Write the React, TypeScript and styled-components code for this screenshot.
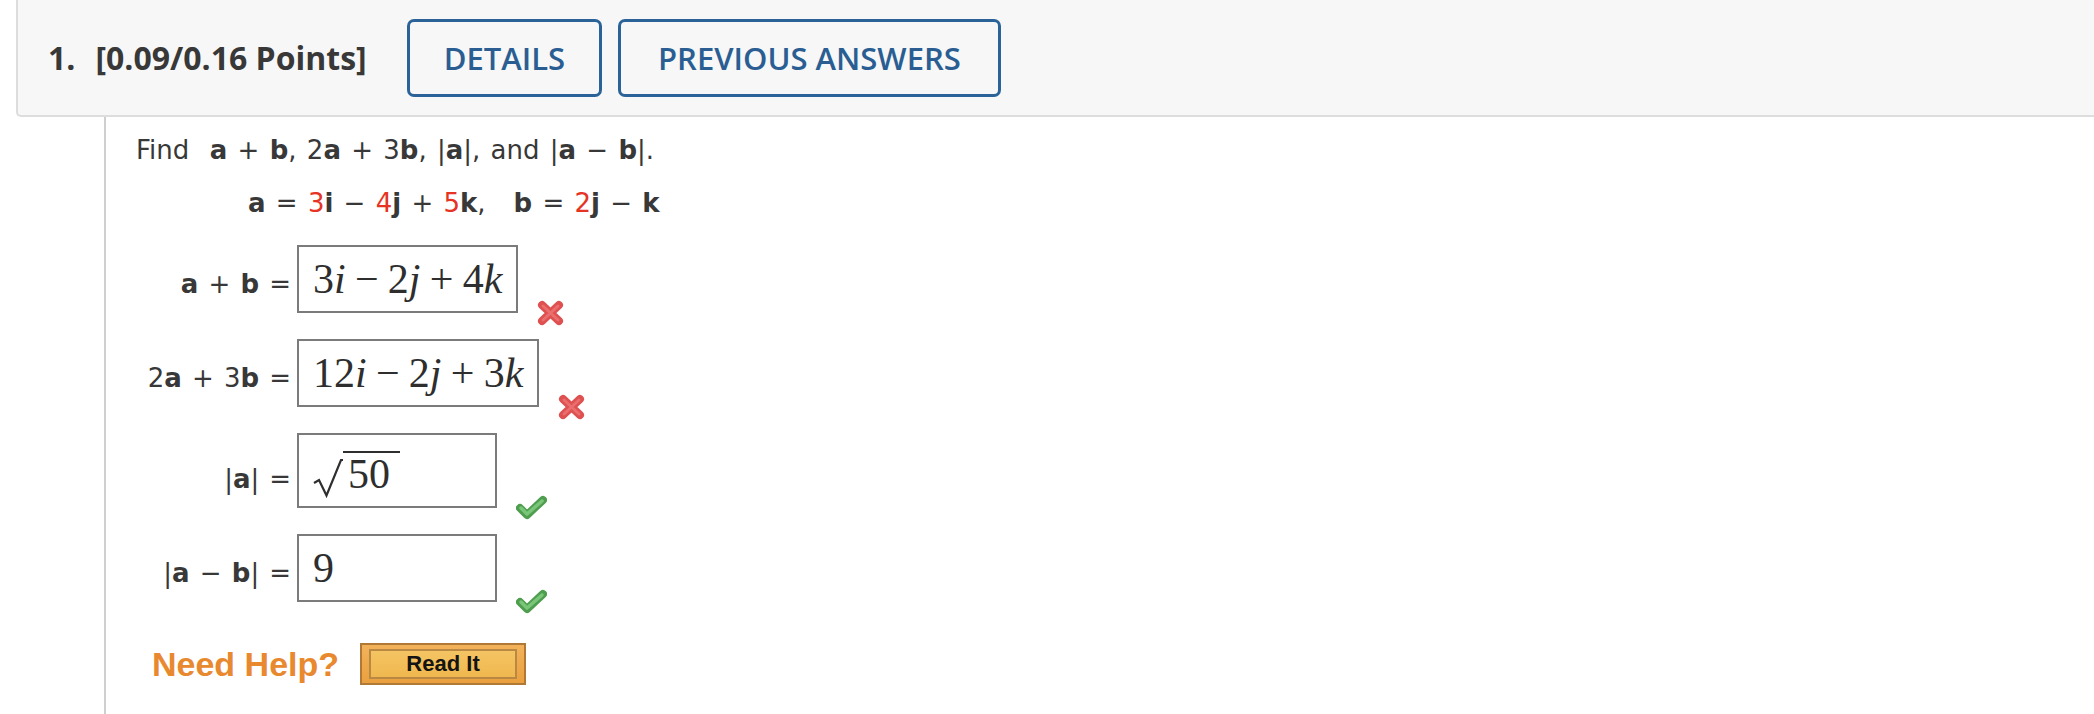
import React from "react"
import styled, { createGlobalStyle } from "styled-components"

const GlobalStyle = createGlobalStyle`
  html, body {
    margin: 0;
    padding: 0;
    background: #fff;
    overflow: hidden;
  }
`

const Page = styled.div`
  width: 2094px;
  height: 714px;
  overflow: hidden;
`

const Header = styled.header`
  display: flex;
  align-items: center;
  height: 115px;
  margin-left: 16px;
  padding-left: 30px;
  background: #f7f7f7;
  border-left: 2px solid #dddddd;
  border-bottom: 2px solid #dddddd;
  border-bottom-left-radius: 5px;
  box-sizing: content-box;
  font-family: "Open Sans", "Liberation Sans", sans-serif;
`

const QuestionNo = styled.span`
  font-size: 32px;
  font-weight: 700;
  color: #383838;
  margin-right: 20px;
`

const Points = styled.span`
  font-size: 32px;
  font-weight: 700;
  color: #383838;
  margin-right: 40px;
`

const HeaderButton = styled.button<{ $wide?: boolean }>`
  height: 78px;
  margin-right: 16px;
  padding: 0 ${({ $wide }) => ($wide ? "37px" : "34px")};
  border: 3px solid #2b6298;
  border-radius: 7px;
  background: transparent;
  color: #2a5e93;
  font-family: "Open Sans", "Liberation Sans", sans-serif;
  font-size: 31px;
  font-weight: 600;
  cursor: pointer;
`

const Body = styled.div`
  margin-left: 104px;
  min-height: 597px;
  padding: 17px 0 0 30px;
  border-left: 2px solid #cfcfcf;
  font-family: "DejaVu Sans", "Verdana", sans-serif;
  font-size: 26px;
  word-spacing: 2px;
  color: #383838;
`

const Line = styled.div<{ $indent?: number }>`
  line-height: 32px;
  padding-left: ${({ $indent }) => $indent || 0}px;
  margin-bottom: 21px;
  white-space: pre;
`

const B = styled.b`
  font-weight: bold;
`

const Red = styled.span`
  color: #e63323;
`

const Gap = styled.span`
  display: inline-block;
  width: 28px;
`

const Rows = styled.div`
  display: flex;
  flex-direction: column;
  gap: 26px;
  margin-top: 26px;
`

const Row = styled.div`
  display: flex;
  align-items: baseline;
`

const Label = styled.div`
  width: 155px;
  margin-right: 6px;
  flex-shrink: 0;
  text-align: right;
  white-space: pre;
  line-height: 32px;
`

const Eq = styled.span`
  margin-left: 10px;
`

const AnswerBox = styled.div<{ $tall?: boolean }>`
  min-width: 200px;
  box-sizing: border-box;
  padding: ${({ $tall }) => ($tall ? "9px" : "2px")} 14px 2px 14px;
  border: 2px solid #7b7b7b;
  line-height: 60px;
  font-family: "Liberation Serif", "DejaVu Serif", serif;
  font-size: 42px;
  word-spacing: 0;
  color: #2e2e2e;
  white-space: nowrap;
`

const V = styled.i`
  font-style: italic;
`

const Op = styled.span`
  margin: 0 0.22em;
`

const Sqrt = styled.span`
  display: inline-flex;
  align-items: baseline;
`

const Radicand = styled.span`
  line-height: 1;
  border-top: 2px solid #2e2e2e;
  padding: 0 10px 0 5px;
`

const Mark = styled.svg`
  align-self: flex-end;
  margin-left: 19px;
  margin-bottom: -13px;
  flex-shrink: 0;
`

const HelpRow = styled.div`
  display: flex;
  align-items: center;
  gap: 21px;
  margin-top: 41px;
  padding-left: 16px;
`

const NeedHelp = styled.span`
  font-family: "Liberation Sans", Arial, sans-serif;
  font-size: 34px;
  font-weight: bold;
  word-spacing: 0;
  color: #e8892f;
`

const ReadIt = styled.button`
  width: 166px;
  height: 42px;
  padding: 4px 7px;
  box-sizing: border-box;
  border: 2px solid #b07a36;
  background: linear-gradient(#f3b25a, #eaa03f);
  cursor: pointer;
`

const ReadItInner = styled.span`
  display: flex;
  align-items: center;
  justify-content: center;
  height: 100%;
  box-sizing: border-box;
  border: 2px solid #b98843;
  background: linear-gradient(#f4c463, #f0b74f);
  font-family: "Liberation Sans", Arial, sans-serif;
  font-size: 22px;
  font-weight: bold;
  color: #141414;
`

const Cross = () => (
  <Mark width="27" height="26" viewBox="0 0 27 26">
    <g strokeLinecap="round">
      <path d="M5 5 L22 21 M22 5 L5 21" stroke="#df5050" strokeWidth="8" />
      <path d="M6 6 L21 20 M21 6 L6 20" stroke="#f07b7b" strokeWidth="3" opacity="0.7" />
    </g>
  </Mark>
)

const Check = () => (
  <Mark width="31" height="26" viewBox="0 0 31 26">
    <g strokeLinecap="round" strokeLinejoin="round" fill="none">
      <path d="M4 13 L11 20 L27 5" stroke="#4f9d4f" strokeWidth="8" />
      <path d="M5 13 L11 19 L26 6" stroke="#79c679" strokeWidth="3.5" />
    </g>
  </Mark>
)

const Radical = () => (
  <svg width="30" height="40" viewBox="0 0 30 40" style={{ alignSelf: "flex-end", marginBottom: "-3px" }}>
    <path
      d="M1 25 L6 22 L13.5 37.5 L28 2 L30 2"
      fill="none"
      stroke="#2e2e2e"
      strokeWidth="2.2"
      strokeLinejoin="miter"
    />
  </svg>
)

export default function App() {
  return (
    <Page>
      <GlobalStyle />
      <Header>
        <QuestionNo>1.</QuestionNo>
        <Points>[0.09/0.16 Points]</Points>
        <HeaderButton>DETAILS</HeaderButton>
        <HeaderButton $wide>PREVIOUS ANSWERS</HeaderButton>
      </Header>

      <Body>
        <Line>
          Find{"  "}<B>a</B> + <B>b</B>, 2<B>a</B> + 3<B>b</B>, |<B>a</B>|, and |<B>a</B> − <B>b</B>|.
        </Line>
        <Line $indent={112}>
          <B>a</B> = <Red>3</Red><B>i</B> − <Red>4</Red><B>j</B> + <Red>5</Red><B>k</B>,<Gap />
          <B>b</B> = <Red>2</Red><B>j</B> − <B>k</B>
        </Line>

        <Rows>
          <Row>
            <Label>
              <B>a</B> + <B>b</B><Eq>=</Eq>
            </Label>
            <AnswerBox>
              3<V>i</V><Op>−</Op>2<V>j</V><Op>+</Op>4<V>k</V>
            </AnswerBox>
            <Cross />
          </Row>
          <Row>
            <Label>
              2<B>a</B> + 3<B>b</B><Eq>=</Eq>
            </Label>
            <AnswerBox>
              12<V>i</V><Op>−</Op>2<V>j</V><Op>+</Op>3<V>k</V>
            </AnswerBox>
            <Cross />
          </Row>
          <Row>
            <Label>
              |<B>a</B>|<Eq>=</Eq>
            </Label>
            <AnswerBox $tall>
              <Sqrt>
                <Radical />
                <Radicand>50</Radicand>
              </Sqrt>
            </AnswerBox>
            <Check />
          </Row>
          <Row>
            <Label>
              |<B>a</B> − <B>b</B>|<Eq>=</Eq>
            </Label>
            <AnswerBox>9</AnswerBox>
            <Check />
          </Row>
        </Rows>

        <HelpRow>
          <NeedHelp>Need Help?</NeedHelp>
          <ReadIt>
            <ReadItInner>Read It</ReadItInner>
          </ReadIt>
        </HelpRow>
      </Body>
    </Page>
  )
}
